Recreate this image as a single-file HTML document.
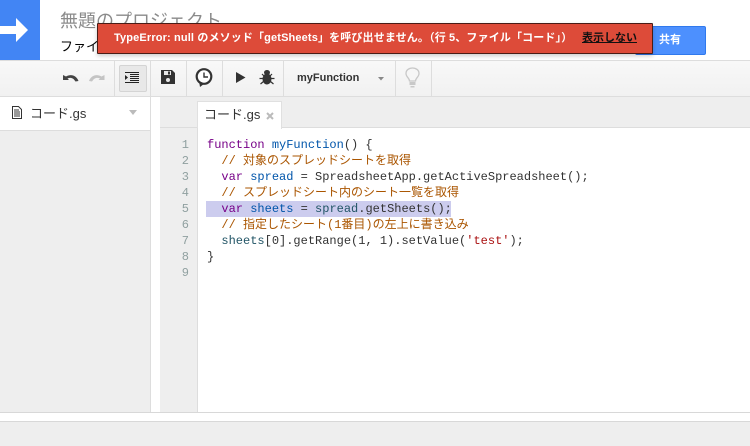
<!DOCTYPE html>
<html>
<head>
<meta charset="utf-8">
<style>
html,body{margin:0;padding:0;background:#fff;}
#p{position:relative;width:750px;height:446px;overflow:hidden;background:#fff;font-family:"Liberation Sans","Noto Sans CJK JP",sans-serif;}
.a{position:absolute;}
.t{position:absolute;white-space:pre;}
.code{font:12px/16px "Liberation Mono","Noto Sans CJK JP",monospace;color:#333;}
.code .l{height:16px;white-space:pre;}
.k{color:#708;}
.v{color:#05a;}
.c{color:#a50;}
.n{color:#256;}
.num{position:absolute;left:160px;width:29px;text-align:right;font:12px/16px "Liberation Mono",monospace;color:#90a0a0;}
.sep{position:absolute;top:61px;width:1px;height:35px;background:#ddd;}
</style>
</head>
<body>
<div id="p">
  <!-- logo -->
  <div class="a" style="left:0;top:0;width:40px;height:60px;background:#4285f4;"></div>
  <svg class="a" style="left:0;top:18px;" width="30" height="24"><path d="M0 8H16V0L28 12L16 24V16H0Z" fill="#fff"/></svg>

  <div class="t" style="left:60px;top:9px;font-size:18px;line-height:24px;color:#8a8a8a;">無題のプロジェクト</div>
  <div class="t" style="left:60px;top:38px;font-size:13px;line-height:18px;color:#000;">ファイル</div>

  <!-- share -->
  <div class="a" style="left:635px;top:26px;width:69px;height:27px;background:#4d90fe;border:1px solid #3079ed;border-radius:2px;"></div>
  <div class="t" style="left:659px;top:32px;font-size:11px;line-height:16px;font-weight:bold;color:#fff;">共有</div>

  <!-- toolbar -->
  <div class="a" style="left:0;top:60px;width:750px;height:35px;background:linear-gradient(#f8f8f8,#f1f1f1);border-top:1px solid #ddd;border-bottom:1px solid #ddd;"></div>
  <div class="sep" style="left:114px"></div>
  <div class="sep" style="left:150px"></div>
  <div class="sep" style="left:186px"></div>
  <div class="sep" style="left:222px"></div>
  <div class="sep" style="left:283px"></div>
  <div class="sep" style="left:395px"></div>
  <div class="sep" style="left:431px"></div>

  <!-- undo / redo -->
  <svg class="a" style="left:63px;top:74px;" width="16" height="8"><path d="M0 1V6H6L4.500 4.500C7.500 3 10.500 4 12.500 7.500L15.500 7C13.500 1.500 8 -0.500 3 2.500L0 1Z" fill="#444"/></svg>
  <svg class="a" style="left:89px;top:74px;" width="16" height="8"><path d="M15.500 1V6H9.500L11 4.500C8 3 5 4 3 7.500L0 7C2 1.500 7.500 -0.500 12.500 2.500L15.500 1Z" fill="#c4c4c4"/></svg>

  <!-- indent toggle -->
  <div class="a" style="left:119px;top:65px;width:26px;height:25px;background:#e8e8e8;border:1px solid #d4d4d4;border-radius:2px;"></div>
  <svg class="a" style="left:125px;top:72px;" width="15" height="12" fill="#222"><path d="M0 0H14V1H0ZM5 2H14V3H5ZM5 4H14V5H5ZM5 6H14V7H5ZM5 8H14V9H5ZM0 10H14V11H0ZM0 3L3 5.500L0 8Z"/></svg>

  <!-- save -->
  <svg class="a" style="left:161px;top:70px;" width="14" height="14"><path d="M0 0H11L14 3V14H0Z" fill="#333"/><rect x="3" y="1" width="7" height="4" fill="#e8e8e8"/><rect x="7" y="1.500" width="2" height="3" fill="#333"/><circle cx="7" cy="10" r="2" fill="#e8e8e8"/></svg>

  <!-- clock -->
  <svg class="a" style="left:195px;top:68px;" width="18" height="20"><circle cx="9" cy="8.500" r="7.300" fill="#fff" stroke="#333" stroke-width="2.200"/><path d="M9 4.500V9H13" fill="none" stroke="#333" stroke-width="1.400"/><path d="M4 13L5 19L9.500 15.500Z" fill="#333"/></svg>

  <!-- run -->
  <svg class="a" style="left:235px;top:71px;" width="12" height="13"><path d="M1 1L10.500 6.500L1 12Z" fill="#333"/></svg>

  <!-- debug bug -->
  <svg class="a" style="left:259px;top:69px;" width="16" height="16"><ellipse cx="8" cy="10" rx="4.500" ry="5.500" fill="#333"/><ellipse cx="8" cy="3.500" rx="3" ry="2.500" fill="#333"/><path d="M3 5L5 7M13 5L11 7M0.500 9.500H4M15.500 9.500H12M1.500 15L4.500 12.500M14.500 15L11.500 12.500" stroke="#333" stroke-width="1.200" fill="none"/></svg>

  <div class="t" style="left:297px;top:71px;font-size:11px;line-height:15px;font-weight:bold;color:#333;">myFunction</div>
  <svg class="a" style="left:378px;top:77px;" width="6" height="4"><path d="M0 0H6L3 3.500Z" fill="#888"/></svg>

  <!-- bulb -->
  <svg class="a" style="left:405px;top:67px;" width="16" height="22"><path d="M4.500 14C4.500 11 1 10 1 6.500C1 3 4 1 7.500 1C11 1 14 3 14 6.500C14 10 10.500 11 10.500 14Z" fill="#f6f6f6" stroke="#c8c8c8" stroke-width="1.300"/><rect x="4.500" y="15" width="6" height="3" fill="#c8c8c8"/><rect x="5.500" y="19" width="4" height="1.500" fill="#c8c8c8"/></svg>

  <!-- sidebar -->
  <div class="a" style="left:0;top:97px;width:150px;height:33px;background:#fff;"></div>
  <div class="a" style="left:0;top:131px;width:150px;height:281px;background:#eee;"></div>
  <div class="a" style="left:0;top:130px;width:151px;height:1px;background:#ddd;"></div>
  <div class="a" style="left:150px;top:97px;width:1px;height:315px;background:#ddd;"></div>
  <svg class="a" style="left:12px;top:106px;" width="10" height="13"><path d="M0.500 0.500H6.500L9.500 3.500V12.500H0.500Z" fill="#fff" stroke="#333"/><path d="M2 4H7M2 6H8M2 8H8M2 10H8" stroke="#333"/></svg>
  <div class="t" style="left:30px;top:106px;font-size:13px;line-height:16px;color:#333;">コード.gs</div>
  <svg class="a" style="left:129px;top:110px;" width="8" height="5"><path d="M0 0H8L4 5Z" fill="#bbb"/></svg>

  <!-- tab strip -->
  <div class="a" style="left:160px;top:97px;width:590px;height:30px;background:#eee;"></div>
  <div class="a" style="left:160px;top:127px;width:590px;height:1px;background:#ddd;"></div>
  <div class="a" style="left:197px;top:101px;width:83px;height:27px;background:#fff;border:1px solid #e0e0e0;border-bottom:none;"></div>
  <div class="t" style="left:204px;top:107px;font-size:13px;line-height:16px;color:#333;">コード.gs</div>
  <svg class="a" style="left:266px;top:112px;" width="8" height="8"><path d="M1 1L7 7M7 1L1 7" stroke="#bbb" stroke-width="2"/></svg>

  <!-- gutter -->
  <div class="a" style="left:160px;top:128px;width:37px;height:284px;background:#eee;border-right:1px solid #ddd;"></div>
  <div class="num" style="top:137px">1<br>2<br>3<br>4<br>5<br>6<br>7<br>8<br>9</div>

  <!-- selection -->
  <div class="a" style="left:206px;top:201px;width:245px;height:16px;background:#ccccee;"></div>

  <!-- code -->
  <div class="a code" style="left:207px;top:137px;">
    <div class="l"><span class="k">function</span> <span class="v">myFunction</span>() {</div>
    <div class="l">  <span class="c">// 対象のスプレッドシートを取得</span></div>
    <div class="l">  <span class="k">var</span> <span class="v">spread</span> = SpreadsheetApp.getActiveSpreadsheet();</div>
    <div class="l">  <span class="c">// スプレッドシート内のシート一覧を取得</span></div>
    <div class="l">  <span class="k">var</span> <span class="v">sheets</span> = <span class="n">spread</span>.getSheets();</div>
    <div class="l">  <span class="c">// 指定したシート(1番目)の左上に書き込み</span></div>
    <div class="l">  <span class="n">sheets</span>[0].getRange(1, 1).setValue(<span style="color:#a11">'test'</span>);</div>
    <div class="l">}</div>
  </div>

  <!-- error bar -->
  <div class="a" style="left:97px;top:23px;width:554px;height:29px;background:#dd4b39;border:1px solid #4a1c16;box-shadow:0 2px 4px rgba(0,0,0,.2);border-radius:1px;"></div>
  <div class="t" style="left:114px;top:30px;font-size:11px;line-height:16px;font-weight:bold;color:#fff;letter-spacing:.14px;">TypeError: null のメソッド「getSheets」を呼び出せません。（行 5、ファイル「コード」）</div>
  <div class="t" style="left:582px;top:30px;font-size:11px;line-height:16px;font-weight:bold;color:#111;text-decoration:underline;">表示しない</div>

  <!-- footer -->
  <div class="a" style="left:0;top:412px;width:750px;height:1px;background:#d8d8d8;"></div>
  <div class="a" style="left:0;top:421px;width:750px;height:25px;background:#eee;border-top:1px solid #d8d8d8;"></div>
</div>
</body>
</html>
